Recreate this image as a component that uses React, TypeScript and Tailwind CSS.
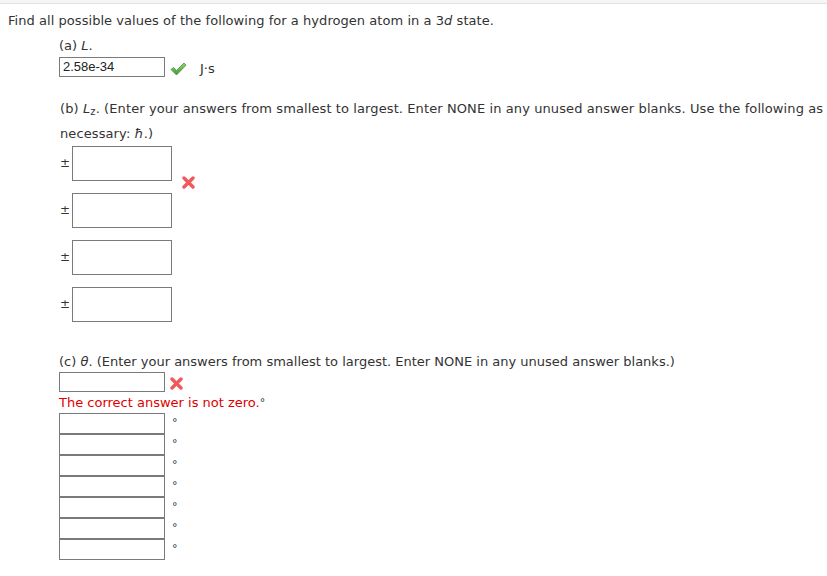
const font = { fontFamily: '"DejaVu Sans", Verdana, sans-serif' };

function Check() {
  return (
    <svg width="17" height="14" viewBox="0 0 17 14" className="block">
      <defs>
        <linearGradient id="g" x1="0" y1="0" x2="0" y2="1">
          <stop offset="0" stopColor="#8fd66f" />
          <stop offset="1" stopColor="#3f9a3a" />
        </linearGradient>
      </defs>
      <path d="M1 7.5 L3.5 5.5 L6.5 8.5 L14 1 L16 3.2 L6.5 13 Z" fill="url(#g)" stroke="#4a8f3d" strokeWidth="0.8" strokeLinejoin="round" />
    </svg>
  );
}

function Cross() {
  return (
    <svg width="13" height="13" viewBox="0 0 13 13" className="block">
      <path d="M2 2 L11 11 M11 2 L2 11" stroke="#f0585c" strokeWidth="3.4" strokeLinecap="round" />
    </svg>
  );
}

function Box({ className }: { className: string }) {
  return <div className={"border border-[#7a7a7a] bg-white " + className} />;
}

export default function App() {
  return (
    <div className="min-h-screen bg-white text-[13px] text-[#333]" style={font}>
      <div className="h-[4px] bg-[#f5f5f5] border-b border-[#e2e2e2]" />
      <p className="pl-[8px] pt-[7px] leading-[20px] tracking-[0.05px]">
        Find all possible values of the following for a hydrogen atom in a 3<i>d</i> state.
      </p>

      {/* (a) */}
      <div className="ml-[59px] mt-[5px]">
        <div className="leading-[20px]">
          (a) <i>L</i>.
        </div>
        <div className="flex items-center">
          <div
            className="w-[106px] h-[20px] border border-[#7a7a7a] pl-[3px] leading-[18px] text-[13px] text-[#222]"
            style={{ fontFamily: '"Liberation Sans", Arial, sans-serif' }}
          >
            2.58e-34
          </div>
          <div className="ml-[5px] mt-[3px]">
            <Check />
          </div>
          <span className="ml-[13px] mt-[3px] text-[13px]">J·s</span>
        </div>
      </div>

      {/* (b) */}
      <div className="ml-[60px] mt-[17px]">
        <div className="leading-[25px] whitespace-nowrap tracking-[0.1px]">
          (b) <i>L</i>
          <sub className="text-[10px]">z</sub>. (Enter your answers from smallest to largest. Enter NONE in any unused answer blanks. Use the following as
          <br />
          necessary: <i>ħ</i>.)
        </div>
        <div className="flex flex-col gap-[12px]">
          <div className="flex items-end">
            <div className="flex items-center">
              <span className="w-[12px] text-[12px]">±</span>
              <Box className="w-[100px] h-[35px]" />
            </div>
            <div className="ml-[10px] -mb-[8px]">
              <Cross />
            </div>
          </div>
          {[0, 1, 2].map((i) => (
            <div key={i} className="flex items-center">
              <span className="w-[12px] text-[12px]">±</span>
              <Box className="w-[100px] h-[35px]" />
            </div>
          ))}
        </div>
      </div>

      {/* (c) */}
      <div className="ml-[59px] mt-[30px]">
        <div className="leading-[20px]">
          (c) <i>θ</i>. (Enter your answers from smallest to largest. Enter NONE in any unused answer blanks.)
        </div>
        <div className="flex items-center">
          <Box className="w-[106px] h-[20px]" />
          <div className="ml-[5px] mt-[3px]">
            <Cross />
          </div>
        </div>
        <div className="leading-[21px] text-[#e00000]">
          The correct answer is not zero.<span className="text-[#333] text-[11px] align-top">°</span>
        </div>
        <div className="flex flex-col">
          {[0, 1, 2, 3, 4, 5, 6].map((i) => (
            <div key={i} className="flex items-start">
              <Box className="w-[106px] h-[21px]" />
              <span className="ml-[7px] mt-[2px] text-[11px] leading-[16px]">°</span>
            </div>
          ))}
        </div>
      </div>
    </div>
  );
}
